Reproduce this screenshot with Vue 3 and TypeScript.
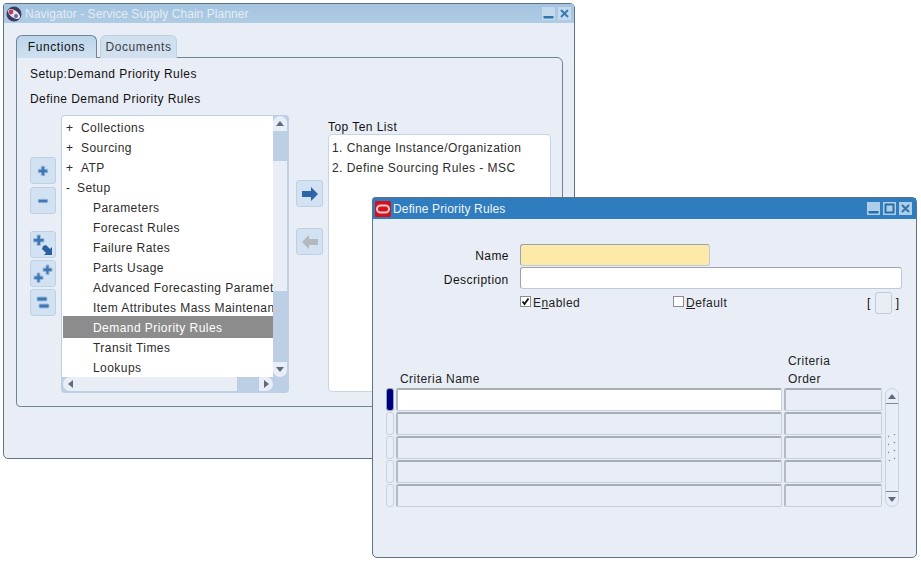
<script setup lang="ts">
interface TreeRow { text: string; sign?: string; child?: boolean; selected?: boolean }
const treeRows: TreeRow[] = [
  { text: 'Collections', sign: '+' },
  { text: 'Sourcing', sign: '+' },
  { text: 'ATP', sign: '+' },
  { text: 'Setup', sign: '-' },
  { text: 'Parameters', child: true },
  { text: 'Forecast Rules', child: true },
  { text: 'Failure Rates', child: true },
  { text: 'Parts Usage', child: true },
  { text: 'Advanced Forecasting Parameters', child: true },
  { text: 'Item Attributes Mass Maintenance', child: true },
  { text: 'Demand Priority Rules', child: true, selected: true },
  { text: 'Transit Times', child: true },
  { text: 'Lookups', child: true },
]
const topTen = ['1. Change Instance/Organization', '2. Define Sourcing Rules - MSC']
const gridRows = [0, 1, 2, 3, 4]
</script>

<template>
  <div class="desktop">
    <section class="window nav">
      <header class="nav-title">
        <svg class="nav-logo" width="18" height="16" viewBox="0 0 18 16">
          <circle cx="9" cy="8" r="7.500" fill="#3b3a63" />
          <ellipse cx="9" cy="8" rx="7" ry="3.600" fill="#e9e4ee" transform="rotate(35 9 8)" />
          <circle cx="6" cy="6" r="2.400" fill="#b8415a" />
          <circle cx="11" cy="10" r="2" fill="#6b6a96" />
        </svg>
        <span class="nav-title-text">Navigator - Service Supply Chain Planner</span>
        <span class="nav-ctrls">
          <svg width="13" height="13" viewBox="0 0 13 13"><rect width="13" height="13" fill="#c3daee" /><rect x="1.500" y="9" width="10" height="2.500" fill="#3274ad" /></svg>
          <svg width="13" height="13" viewBox="0 0 13 13"><rect width="13" height="13" fill="#c3daee" /><path d="M3 3l7 7M10 3l-7 7" stroke="#3a7ab2" stroke-width="2" /></svg>
        </span>
      </header>
      <div class="nav-body">
        <div class="tabs">
          <div class="tab active">Functions</div>
          <div class="tab">Documents</div>
        </div>
        <div class="panel">
          <p class="crumb">Setup:Demand Priority Rules</p>
          <p class="crumb second">Define Demand Priority Rules</p>
          <div class="work">
            <div class="tools">
              <button class="tool"><svg width="12" height="12" viewBox="0 0 14 14"><path d="M5 1.500h4v3.500h3.500v4H9v3.500H5V9H1.500V5H5z" fill="#3f76b4" stroke="#9dbbdb" /></svg></button>
              <button class="tool"><svg width="12" height="12" viewBox="0 0 14 14"><rect x="1.500" y="5" width="11" height="4" rx="1" fill="#3f76b4" stroke="#9dbbdb" /></svg></button>
              <button class="tool gap"><svg width="22" height="22" viewBox="0 0 22 22"><path d="M5 1h3.500v3.500H12v3.500H8.500v3.500H5V8H1.500V4.500H5z" fill="#3f76b4" stroke="#9dbbdb" /><path d="M11 12l3-1 4 4 2-2v8h-8l2-2-4-4z" fill="#2b5f9e" /></svg></button>
              <button class="tool"><svg width="22" height="22" viewBox="0 0 22 22"><path d="M5 10h3v3h3v3.500H8v3H5v-3H2V13h3z" fill="#3f76b4" stroke="#9dbbdb" /><path d="M14 2h3v3h3v3.500h-3v3h-3v-3h-3V5h3z" fill="#3f76b4" stroke="#9dbbdb" /></svg></button>
              <button class="tool"><svg width="22" height="22" viewBox="0 0 22 22"><rect x="5" y="5" width="10" height="4" rx="1" fill="#3f76b4" stroke="#9dbbdb" /><rect x="7" y="12" width="10" height="4" rx="1" fill="#3f76b4" stroke="#9dbbdb" /></svg></button>
            </div>
            <div class="tree-wrap">
              <div class="tree-top">
                <ul class="tree">
                  <li v-for="row in treeRows" :key="row.text" class="tree-row" :class="{ child: row.child, selected: row.selected }">
                    <span v-if="row.sign" class="sign" :class="{ minus: row.sign === '-' }">{{ row.sign }}</span>{{ row.text }}
                  </li>
                </ul>
                <div class="vbar">
                  <div class="sb-btn v top"><i class="tri up"></i></div>
                  <div class="vtrack"><div class="vthumb"></div></div>
                  <div class="sb-btn v bottom"><i class="tri down"></i></div>
                </div>
              </div>
              <div class="hbar">
                <div class="sb-btn h left"><i class="tri lft"></i></div>
                <div class="hthumb"></div>
                <div class="htrack"></div>
                <div class="sb-btn h right"><i class="tri rgt"></i></div>
              </div>
            </div>
            <div class="moves">
              <button class="tool"><svg width="18" height="14" viewBox="0 0 18 14"><path d="M1 4h9V0l7 7-7 7v-4H1z" fill="#2f64a6" /></svg></button>
              <button class="tool"><svg width="18" height="14" viewBox="0 0 18 14"><path d="M17 4H8V0L1 7l7 7v-4h9z" fill="#b4b8bd" /></svg></button>
            </div>
            <div class="top-ten">
              <div class="top-label">Top Ten List</div>
              <ul class="top-list">
                <li v-for="t in topTen" :key="t">{{ t }}</li>
              </ul>
            </div>
          </div>
        </div>
      </div>
    </section>

    <section class="window dlg">
      <header class="dlg-title">
        <svg class="dlg-logo" width="16" height="16" viewBox="0 0 16 16"><rect width="16" height="16" rx="1" fill="#d6101e" /><rect x="2" y="4.500" width="12" height="7" rx="3.500" fill="none" stroke="#f6c9c9" stroke-width="2" /></svg>
        <span class="dlg-title-text">Define Priority Rules</span>
        <span class="dlg-ctrls">
          <svg width="13" height="13" viewBox="0 0 13 13"><rect width="13" height="13" fill="#aecde7" /><rect x="1.500" y="9" width="10" height="2.500" fill="#2a6ea8" /></svg>
          <svg width="13" height="13" viewBox="0 0 13 13"><rect width="13" height="13" fill="#aecde7" /><rect x="2.500" y="2.500" width="8" height="8" fill="none" stroke="#2a6ea8" stroke-width="2" /></svg>
          <svg width="13" height="13" viewBox="0 0 13 13"><rect width="13" height="13" fill="#aecde7" /><path d="M3 3l7 7M10 3l-7 7" stroke="#2f74ad" stroke-width="2" /></svg>
        </span>
      </header>
      <div class="dlg-body">
        <div class="form-row">
          <label class="flabel">Name</label>
          <div class="input name"></div>
        </div>
        <div class="form-row">
          <label class="flabel lower">Description</label>
          <div class="input desc"></div>
        </div>
        <div class="checks">
          <span class="check enabled">
            <svg width="11" height="11" viewBox="0 0 11 11"><rect x=".5" y=".5" width="10" height="10" fill="#fff" stroke="#8a8f96" /><path d="M2.500 5.500l2 2.500 4-5.500" fill="none" stroke="#111" stroke-width="1.800" /></svg>
            <span>E<u>n</u>abled</span>
          </span>
          <span class="check defaulted">
            <svg width="11" height="11" viewBox="0 0 11 11"><rect x=".5" y=".5" width="10" height="10" fill="#fff" stroke="#8a8f96" /></svg>
            <span><u>D</u>efault</span>
          </span>
          <span class="bracket">[<span class="bracket-box"></span>]</span>
        </div>
        <div class="grid-head">
          <div class="gh-name">Criteria Name</div>
          <div class="gh-order">Criteria<br />Order</div>
        </div>
        <div class="grid">
          <div class="grid-rows">
            <div v-for="r in gridRows" :key="r" class="grow">
              <div class="indicator" :class="{ on: r === 0 }"></div>
              <div class="cell cname" :class="{ current: r === 0 }"></div>
              <div class="cell corder"></div>
            </div>
          </div>
          <div class="gbar">
            <div class="gbar-end top"><i class="tri up"></i></div>
            <div class="grip">
              <svg width="8" height="28" viewBox="0 0 8 28"><path d="M0 3l1-1M6 1l1-1M0 11l1-1M6 9l1-1M0 19l1-1M6 17l1-1M1 27l1-1M6 25l1-1" stroke="#7f8b99" stroke-width="1.200" /></svg>
            </div>
            <div class="gbar-end bottom"><i class="tri down"></i></div>
          </div>
        </div>
      </div>
    </section>
  </div>
</template>

<style>
body { margin: 0; background: #fff; }
</style>

<style scoped>
.desktop {
  position: relative;
  width: 921px;
  height: 565px;
  overflow: hidden;
  background: #fff;
  font-family: "Liberation Sans", Arial, sans-serif;
  font-size: 12px;
  letter-spacing: 0.45px;
  color: #222;
}
p, ul { margin: 0; padding: 0; list-style: none; }
button { padding: 0; font: inherit; }

.window {
  position: absolute;
  box-sizing: border-box;
  background: #e9eef6;
  border: 1px solid #5d7388;
  border-radius: 3px 5px 5px 5px;
}
.nav { left: 3px; top: 3px; width: 572px; height: 456px; }
.dlg { left: 372px; top: 197px; width: 545px; height: 361px; }

.nav-title {
  display: flex;
  align-items: center;
  height: 19px;
  padding: 0 3px 0 1px;
  background: linear-gradient(#a3c3df, #b0cce4);
}
.nav-title-text { margin-left: 2px; color: #e3edf6; letter-spacing: 0.05px; }
.nav-ctrls { display: flex; margin-left: auto; gap: 3px; }

.nav-body { padding: 12px 11px 0 12px; }
.tabs { display: flex; gap: 3px; height: 23px; position: relative; z-index: 1; }
.tab {
  box-sizing: border-box;
  width: 77px;
  display: flex;
  align-items: center;
  justify-content: center;
  background: #d1e0ef;
  border: 1px solid #bccfe3;
  border-bottom: 0;
  border-radius: 6px 6px 0 0;
  color: #3a3f44;
  letter-spacing: 0.6px;
}
.tab.active {
  width: 81px;
  background: linear-gradient(#bcd5ea, #cfe0f0);
  border: 1px solid #6d8499;
  border-bottom: 0;
  color: #111;
}
.panel {
  box-sizing: border-box;
  height: 350px;
  width: 547px;
  margin-top: -1px;
  padding: 9px 0 0 13px;
  border: 1px solid #6d8499;
  border-radius: 0 6px 0 4px;
}
.crumb { line-height: 14px; color: #111; }
.crumb.second { margin-top: 11px; }

.work { display: flex; margin-top: 9px; }
.tools { display: flex; flex-direction: column; width: 31px; padding-top: 42px; gap: 3px; }
.tool {
  box-sizing: border-box;
  width: 26px;
  height: 27px;
  display: flex;
  align-items: center;
  justify-content: center;
  background: #d2e2f2;
  border: 1px solid #bdd0e4;
  border-radius: 3px;
}
.tool.gap { margin-top: 14px; }
.tools .tool:nth-child(n+3) { margin-bottom: -1px; }

.tree-wrap {
  box-sizing: border-box;
  width: 228px;
  height: 278px;
  display: flex;
  flex-direction: column;
  background: #bccfe5;
  border-radius: 4px;
}
.tree-top { display: flex; height: 262px; }
.tree {
  box-sizing: border-box;
  width: 211px;
  margin: 1px 0 0 1px;
  padding-top: 2px;
  background: #fff;
  overflow: hidden;
  border-radius: 3px 0 0 0;
}
.tree-row {
  height: 20px;
  line-height: 21px;
  padding-left: 4px;
  white-space: nowrap;
  overflow: hidden;
  color: #2c2c2c;
}
.tree-row.child { padding-left: 31px; }
.tree-row.selected {
  height: 22px;
  line-height: 25px;
  margin: -2px 0 0 1px;
  padding-left: 30px;
  background: #8c8c8c;
  color: #fff;
}
.sign { display: inline-block; width: 15px; }
.sign.minus { width: 11px; }

.vbar { display: flex; flex-direction: column; width: 15px; margin-top: 1px; }
.sb-btn { background: #e9eef6; display: flex; align-items: center; justify-content: center; flex: none; }
.sb-btn.v { height: 16px; width: 14px; }
.sb-btn.v.top { border-radius: 7px 7px 0 0; height: 15px; }
.sb-btn.v.bottom { border-radius: 0 0 7px 7px; height: 15px; }
.vtrack { flex: 1; padding-top: 30px; width: 14px; }
.vthumb { height: 130px; background: #e9eef6; }
.hbar { display: flex; height: 15px; padding-left: 2px; align-items: stretch; }
.sb-btn.h { width: 15px; height: 14px; }
.sb-btn.h.left { border-radius: 7px 0 0 7px; }
.sb-btn.h.right { border-radius: 0 7px 7px 0; width: 14px; }
.hthumb { width: 159px; height: 14px; background: #e9eef6; }
.htrack { width: 22px; }

.tri { display: block; width: 0; height: 0; border-style: solid; border-color: transparent; }
.tri.up { border-width: 0 4.500px 5px; border-bottom-color: #5e6a80; }
.tri.down { border-width: 5px 4.500px 0; border-top-color: #5e6a80; }
.tri.lft { border-width: 4.500px 5px 4.500px 0; border-right-color: #5e6a80; }
.tri.rgt { border-width: 4.500px 0 4.500px 5px; border-left-color: #5e6a80; }

.moves { display: flex; flex-direction: column; width: 39px; padding: 65px 0 0 7px; box-sizing: border-box; gap: 21px; }
.moves .tool { width: 27px; }
.top-ten { width: 223px; }
.top-label { line-height: 14px; margin-top: 5px; color: #111; }
.top-list {
  box-sizing: border-box;
  height: 258px;
  padding: 3px 0 0 3px;
  background: #fff;
  border: 1px solid #c7d5e5;
  border-radius: 4px;
}
.top-list li { height: 20px; line-height: 20px; color: #2c2c2c; }

.dlg-title {
  display: flex;
  align-items: center;
  height: 21px;
  padding: 0 4px 0 2px;
  background: #2f7dbf;
}
.dlg-title-text { margin-left: 2px; color: #eef5fb; letter-spacing: 0.15px; }
.dlg-ctrls { display: flex; margin-left: auto; gap: 3px; }

.dlg-body { padding: 25px 14px 0 13px; }
.form-row { display: flex; height: 23px; }
.flabel { width: 134px; padding: 5px 11px 0 0; box-sizing: border-box; text-align: right; color: #111; line-height: 14px; }
.flabel.lower { padding-top: 6px; }
.input {
  box-sizing: border-box;
  height: 22px;
  border: 1px solid #c0cad6;
  border-top-color: #9aa3ad;
  border-left-color: #9aa3ad;
  border-radius: 3px;
  background: #fff;
}
.input.name { width: 190px; background: #fde9a8; }
.input.desc { width: 383px; }

.checks { display: flex; align-items: center; height: 24px; margin-top: 1px; padding-left: 134px; }
.check { display: inline-flex; align-items: center; gap: 2px; color: #222; }
.check svg { margin-top: -3px; }
.check.enabled { width: 153px; }
.check.defaulted { width: 194px; }
.bracket { display: inline-flex; align-items: center; gap: 4px; color: #111; }
.bracket-box {
  box-sizing: border-box;
  width: 17px;
  height: 22px;
  border: 1px solid #bfcbd8;
  border-radius: 3px;
  background: #e9eef6;
}

.grid-head { display: flex; align-items: flex-end; height: 73px; padding-left: 14px; line-height: 18px; color: #222; }
.gh-name { width: 388px; }
.grid { display: flex; }
.grid-rows { display: flex; flex-direction: column; gap: 1px; width: 499px; }
.grow { display: flex; height: 23px; }
.indicator {
  box-sizing: border-box;
  width: 8px;
  margin-right: 2px;
  border: 1px solid #c5d3e3;
  border-radius: 3px;
  background: #e9eef6;
}
.indicator.on { background: #00007f; border-color: #8fa7c2; }
.cell {
  box-sizing: border-box;
  border: 1px solid #c5d0dc;
  border-top: 2px solid #a6adb5;
  border-left: 2px solid #b3bac2;
  border-radius: 2px;
  background: #e9eef6;
}
.cname { width: 386px; }
.cname.current { background: #fff; }
.corder { width: 98px; margin-left: 2px; }

.gbar {
  box-sizing: border-box;
  width: 14px;
  height: 119px;
  display: flex;
  flex-direction: column;
  border: 1px solid #c5d3e3;
  border-radius: 7px;
}
.gbar-end { height: 14px; display: flex; align-items: center; justify-content: center; flex: none; }
.gbar-end.top { border-bottom: 1px solid #7d8794; }
.gbar-end.bottom { border-top: 1px solid #7d8794; }
.grip { flex: 1; display: flex; align-items: center; justify-content: center; }
</style>
